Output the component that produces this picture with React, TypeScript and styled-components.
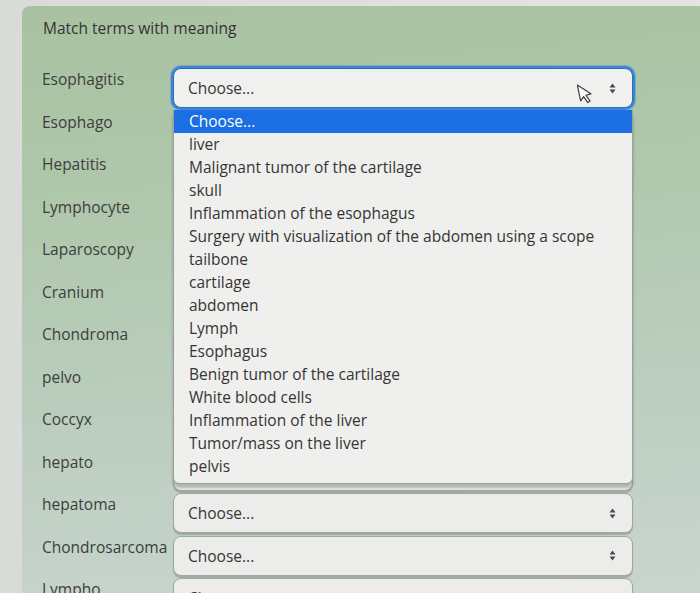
import React from 'react'
import styled, { createGlobalStyle, css } from 'styled-components'

const GlobalStyle = createGlobalStyle`
	html, body {
		margin: 0;
		padding: 0;
		background: #dcdddb;
	}
	body {
		font-family: 'Open Sans', 'Noto Sans', sans-serif;
		color: #383a38;
	}
`

const Page = styled.div`
	display: flex;
	height: 593px;
	overflow: hidden;
	padding: 6px 0 0 22px;
	box-sizing: border-box;
	background: linear-gradient(90deg, #d9dbd9 0%, #e4e5e3 100%);
`

const Panel = styled.main`
	flex: 1;
	padding: 11px 0 0 20px;
	border-top-left-radius: 8px;
	background: linear-gradient(
		175deg,
		#a8c2a1 0%,
		#afc7ab 30%,
		#bacdbd 62%,
		#c9d5cf 100%
	);
`

const Title = styled.h1`
	margin: 0 0 29px 1px;
	font-size: 15.5px;
	font-weight: 400;
	line-height: 22px;
	color: #333;
`

const Rows = styled.div`
	display: flex;
	flex-direction: column;
	gap: 2.5px;
`

const Row = styled.div`
	display: grid;
	grid-template-columns: 131px 460px;
	height: 40px;
`

const Term = styled.span`
	font-size: 15.5px;
	line-height: 22px;
	color: #3c3e3c;
	white-space: nowrap;
`

const Select = styled.div<{ $focused?: boolean }>`
	position: relative;
	display: flex;
	align-items: center;
	justify-content: space-between;
	box-sizing: border-box;
	height: 40px;
	padding: 0 16px 0 14px;
	border: 1px solid #a3a5a3;
	border-radius: 8px;
	background: #ecedeb;
	box-shadow: 0 2px 1px rgba(90, 100, 95, 0.35);
	font-size: 15.5px;
	color: #363636;
	${(p) =>
		p.$focused &&
		css`
			z-index: 5;
			border-color: #2a6fbe;
			background: #f0f0ee;
			box-shadow: 0 0 0 2px #3c86d4, 0 0 0 3px rgba(60, 134, 212, 0.4);
		`}
`

const Arrows = styled.svg`
	width: 7px;
	height: 11px;
	flex: none;
`

const Cursor = styled.svg`
	position: absolute;
	right: 38px;
	top: 13px;
	width: 17px;
	height: 23px;
`

const Menu = styled.ul`
	position: absolute;
	top: 41px;
	left: -1px;
	right: -1px;
	z-index: 10;
	margin: 0;
	padding: 0 0 5px;
	list-style: none;
	background: #efefed;
	border: 1px solid #9d9f9d;
	border-top: none;
	border-radius: 0 0 6px 6px;
	box-shadow: 0 4px 3px rgba(70, 80, 75, 0.35);
`

const Option = styled.li<{ $active?: boolean }>`
	height: 23px;
	padding-left: 15px;
	font-size: 15.5px;
	line-height: 23px;
	color: #353535;
	white-space: nowrap;
	${(p) =>
		p.$active &&
		css`
			background: #1b6fe2;
			color: #fff;
		`}
`

const terms = [
	'Esophagitis',
	'Esophago',
	'Hepatitis',
	'Lymphocyte',
	'Laparoscopy',
	'Cranium',
	'Chondroma',
	'pelvo',
	'Coccyx',
	'hepato',
	'hepatoma',
	'Chondrosarcoma',
	'Lympho',
]

const meanings = [
	'Choose...',
	'liver',
	'Malignant tumor of the cartilage',
	'skull',
	'Inflammation of the esophagus',
	'Surgery with visualization of the abdomen using a scope',
	'tailbone',
	'cartilage',
	'abdomen',
	'Lymph',
	'Esophagus',
	'Benign tumor of the cartilage',
	'White blood cells',
	'Inflammation of the liver',
	'Tumor/mass on the liver',
	'pelvis',
]

const UpDown = () => (
	<Arrows viewBox="0 0 7 11">
		<path d="M3.5 0.5 L6.5 4.5 L0.5 4.5 Z" fill="#4a4a4a" />
		<path d="M3.5 10.5 L6.5 6.5 L0.5 6.5 Z" fill="#4a4a4a" />
	</Arrows>
)

const Pointer = () => (
	<Cursor viewBox="0 0 16 22">
		<path
			d="M2 1.5 L2 17 L5.6 13.6 L8.4 20 L10.8 19 L8.1 12.7 L13 12.4 Z"
			fill="#fafafa"
			stroke="#3a3a3a"
			strokeWidth="1.1"
			strokeLinejoin="round"
			transform="rotate(-12 8 11)"
		/>
	</Cursor>
)

export default function App() {
	return (
		<>
			<GlobalStyle />
			<Page>
				<Panel>
					<Title>Match terms with meaning</Title>
					<Rows>
						{terms.map((term, i) => (
							<Row key={term}>
								<Term>{term}</Term>
								<Select $focused={i === 0}>
									<span>Choose...</span>
									{i === 0 && <Pointer />}
									<UpDown />
									{i === 0 && (
										<Menu>
											{meanings.map((m, j) => (
												<Option key={m} $active={j === 0}>
													{m}
												</Option>
											))}
										</Menu>
									)}
								</Select>
							</Row>
						))}
					</Rows>
				</Panel>
			</Page>
		</>
	)
}
